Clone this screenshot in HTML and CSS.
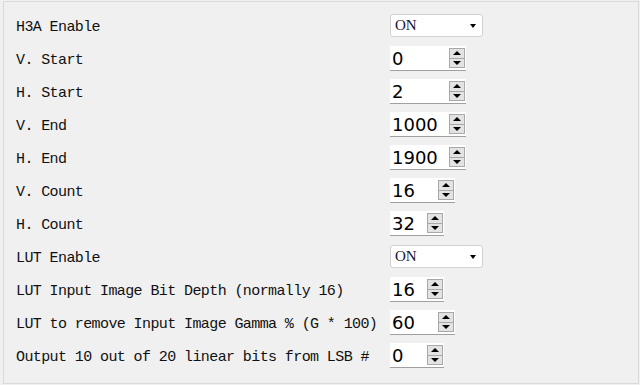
FILE: index.html
```html
<!DOCTYPE html>
<html lang="en">
<head>
    <meta charset="UTF-8">
    <title>H3A / LUT Settings</title>
    <link rel="stylesheet" href="styles.css">
</head>
<body>
    <div class="panel">
        <div class="row">
            <span class="label">H3A Enable</span>
            <div class="combo"><span>ON</span><i class="arrow"></i></div>
        </div>
        <div class="row">
            <span class="label">V. Start</span>
            <div class="spin wide"><span class="value">0</span><div class="spin-btn"><span class="up"></span><span class="down"></span></div></div>
        </div>
        <div class="row">
            <span class="label">H. Start</span>
            <div class="spin wide"><span class="value">2</span><div class="spin-btn"><span class="up"></span><span class="down"></span></div></div>
        </div>
        <div class="row">
            <span class="label">V. End</span>
            <div class="spin wide"><span class="value">1000</span><div class="spin-btn"><span class="up"></span><span class="down"></span></div></div>
        </div>
        <div class="row">
            <span class="label">H. End</span>
            <div class="spin wide"><span class="value">1900</span><div class="spin-btn"><span class="up"></span><span class="down"></span></div></div>
        </div>
        <div class="row">
            <span class="label">V. Count</span>
            <div class="spin mid"><span class="value">16</span><div class="spin-btn"><span class="up"></span><span class="down"></span></div></div>
        </div>
        <div class="row">
            <span class="label">H. Count</span>
            <div class="spin narrow"><span class="value">32</span><div class="spin-btn"><span class="up"></span><span class="down"></span></div></div>
        </div>
        <div class="row">
            <span class="label">LUT Enable</span>
            <div class="combo"><span>ON</span><i class="arrow"></i></div>
        </div>
        <div class="row">
            <span class="label">LUT Input Image Bit Depth (normally 16)</span>
            <div class="spin narrow"><span class="value">16</span><div class="spin-btn"><span class="up"></span><span class="down"></span></div></div>
        </div>
        <div class="row">
            <span class="label">LUT to remove Input Image Gamma % (G * 100)</span>
            <div class="spin mid"><span class="value">60</span><div class="spin-btn"><span class="up"></span><span class="down"></span></div></div>
        </div>
        <div class="row">
            <span class="label">Output 10 out of 20 linear bits from LSB #</span>
            <div class="spin narrow"><span class="value">0</span><div class="spin-btn"><span class="up"></span><span class="down"></span></div></div>
        </div>
    </div>
</body>
</html>
```

FILE: styles.css
```css
* {
    margin: 0;
    padding: 0;
    box-sizing: border-box;
}

html, body {
    width: 640px;
    height: 385px;
    overflow: hidden;
}

body {
    background: #f0f0f0;
    font-family: 'Liberation Mono', monospace;
}

.panel {
    margin: 1px 1px 0 3px;
    height: 383px;
    border: 1px solid #dadada;
    background: #f0f0f0;
    padding: 7px 0 0 12px;
}

.row {
    display: grid;
    grid-template-columns: 374px auto;
    align-items: center;
    height: 33px;
}

.label {
    font-size: 15px;
    letter-spacing: -0.6px;
    color: #111;
    white-space: pre;
    padding-top: 3px;
}

.combo {
    width: 93px;
    height: 23px;
    background: #fff;
    border: 1px solid #d2d2d2;
    border-radius: 3px;
    display: flex;
    align-items: center;
    justify-content: space-between;
    padding: 0 6px 0 4px;
    font-family: 'Liberation Serif', serif;
    font-size: 15px;
    color: #111133;
}

.arrow {
    width: 0;
    height: 0;
    border-left: 3.5px solid transparent;
    border-right: 3.5px solid transparent;
    border-top: 4px solid #000;
}

.spin {
    height: 25px;
    background: #fff;
    border-bottom: 1px solid #a0a0a0;
    display: flex;
    align-items: center;
    padding: 0 1px 0 2px;
}

.spin.wide { width: 76px; }
.spin.mid { width: 65px; }
.spin.narrow { width: 54px; }

.value {
    flex: 1;
    font-family: 'DejaVu Sans', sans-serif;
    font-size: 18px;
    color: #000;
}

.spin-btn {
    width: 16px;
    height: 20px;
    border: 1px solid #a8a8a8;
    background: #e3e3e3;
    display: flex;
    flex-direction: column;
}

.spin-btn span {
    flex: 1;
    display: flex;
    align-items: center;
    justify-content: center;
}

.spin-btn .down {
    border-top: 1px solid #a8a8a8;
}

.spin-btn .up::after,
.spin-btn .down::after {
    content: "";
    width: 0;
    height: 0;
    border-left: 4px solid transparent;
    border-right: 4px solid transparent;
}

.spin-btn .up::after {
    border-bottom: 4px solid #000;
}

.spin-btn .down::after {
    border-top: 4px solid #000;
}
```
